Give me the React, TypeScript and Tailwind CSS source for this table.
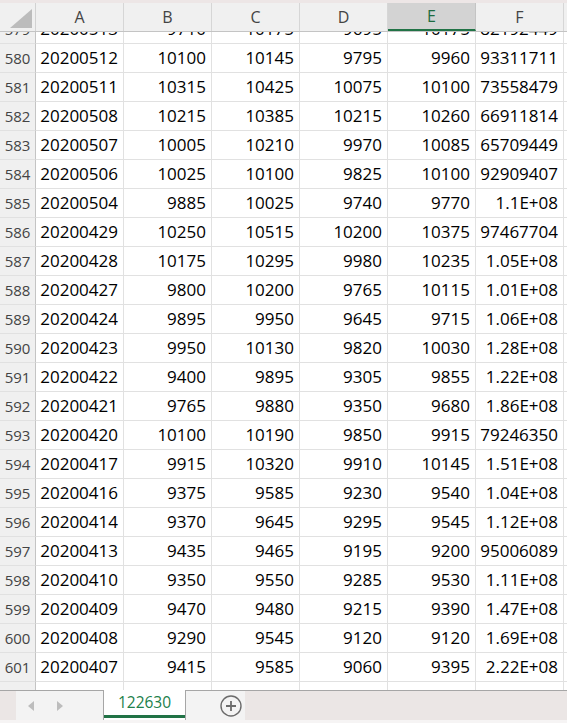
import React from "react"

const rows: [number, string[]][] = [
  [579, ["20200513", "9710", "10175", "9695", "10175", "82192449"]],
  [580, ["20200512", "10100", "10145", "9795", "9960", "93311711"]],
  [581, ["20200511", "10315", "10425", "10075", "10100", "73558479"]],
  [582, ["20200508", "10215", "10385", "10215", "10260", "66911814"]],
  [583, ["20200507", "10005", "10210", "9970", "10085", "65709449"]],
  [584, ["20200506", "10025", "10100", "9825", "10100", "92909407"]],
  [585, ["20200504", "9885", "10025", "9740", "9770", "1.1E+08"]],
  [586, ["20200429", "10250", "10515", "10200", "10375", "97467704"]],
  [587, ["20200428", "10175", "10295", "9980", "10235", "1.05E+08"]],
  [588, ["20200427", "9800", "10200", "9765", "10115", "1.01E+08"]],
  [589, ["20200424", "9895", "9950", "9645", "9715", "1.06E+08"]],
  [590, ["20200423", "9950", "10130", "9820", "10030", "1.28E+08"]],
  [591, ["20200422", "9400", "9895", "9305", "9855", "1.22E+08"]],
  [592, ["20200421", "9765", "9880", "9350", "9680", "1.86E+08"]],
  [593, ["20200420", "10100", "10190", "9850", "9915", "79246350"]],
  [594, ["20200417", "9915", "10320", "9910", "10145", "1.51E+08"]],
  [595, ["20200416", "9375", "9585", "9230", "9540", "1.04E+08"]],
  [596, ["20200414", "9370", "9645", "9295", "9545", "1.12E+08"]],
  [597, ["20200413", "9435", "9465", "9195", "9200", "95006089"]],
  [598, ["20200410", "9350", "9550", "9285", "9530", "1.11E+08"]],
  [599, ["20200409", "9470", "9480", "9215", "9390", "1.47E+08"]],
  [600, ["20200408", "9290", "9545", "9120", "9120", "1.69E+08"]],
  [601, ["20200407", "9415", "9585", "9060", "9395", "2.22E+08"]],
  [602, ["", "", "", "", "", ""]],
]

const cols = ["A", "B", "C", "D", "E", "F"]

export default function App() {
  return (
    <div
      className="w-[567px] h-[723px] flex flex-col overflow-hidden bg-white"
      style={{ fontFamily: '"Open Sans", "Noto Sans", sans-serif' }}
    >
      {/* window strip */}
      <div className="h-[3px] shrink-0 bg-[#ede6e6]" />

      {/* Column headers */}
      <div className="h-[29px] shrink-0 flex bg-[#f0f0f0] border-b border-[#c4c4c4]">
        <div className="w-[36px] shrink-0 relative border-r border-[#d2d2d2]">
          <svg className="absolute right-[3px] bottom-[3px]" width="22" height="19" viewBox="0 0 22 19">
            <polygon points="22,0 22,19 0,19" fill="#bcbcbc" />
          </svg>
        </div>
        {cols.map((c) =>
          c === "E" ? (
            <div
              key={c}
              className="w-[88px] shrink-0 flex items-center justify-center bg-[#d3d3d3] border-r border-[#c4c4c4] border-b-2 border-b-[#217346] text-[16px] text-[#1e6b41]"
            >
              {c}
            </div>
          ) : (
            <div
              key={c}
              className="w-[88px] shrink-0 flex items-center justify-center border-r border-[#d6d6d6] text-[16px] text-[#444]"
            >
              {c}
            </div>
          )
        )}
        <div className="flex-1" />
      </div>

      {/* Grid body */}
      <div className="flex-1 overflow-hidden">
        {rows.map(([n, vals], i) => (
          <div
            key={n}
            className={`h-[29px] flex ${i === 0 ? "mt-[-17px]" : ""}`}
          >
            <div className="w-[36px] shrink-0 flex items-center justify-center bg-[#f0f0f0] border-r border-[#c4c4c4] border-b border-b-[#e1e1e1] text-[15px] text-[#444]">
              {n}
            </div>
            {vals.map((v, j) => (
              <div
                key={j}
                className="w-[88px] shrink-0 flex items-center justify-end pr-[5px] border-r border-b border-[#e1e1e1] text-[17px] text-black whitespace-nowrap overflow-hidden"
              >
                {v}
              </div>
            ))}
            <div className="flex-1 border-b border-[#e1e1e1]" />
          </div>
        ))}
      </div>

      {/* Sheet tabs */}
      <div className="h-[30px] shrink-0 flex bg-[#ebe6e5]">
        <div className="w-[16px] shrink-0 border-t border-[#a6a6a6]" />
        <div className="w-[87px] shrink-0 flex items-center gap-[23px] pl-[12px] bg-[#f3f3f3] border-t border-[#a6a6a6]">
          <svg width="6" height="10" viewBox="0 0 6 10">
            <polygon points="6,0 6,10 0,5" fill="#bdbdbd" />
          </svg>
          <svg width="6" height="10" viewBox="0 0 6 10">
            <polygon points="0,0 0,10 6,5" fill="#bdbdbd" />
          </svg>
        </div>
        <div className="w-[83px] shrink-0 flex flex-col bg-white border-x border-[#a6a6a6]">
          <div className="flex-1 flex items-center justify-center text-[15.5px] text-[#21804a]">
            122630
          </div>
          <div className="h-[3px] mb-[2px] bg-[#217346]" />
        </div>
        <div className="w-[59px] shrink-0 flex items-center justify-end pr-[3px] bg-[#f3f3f3] border-t border-[#a6a6a6]">
          <svg width="22" height="22" viewBox="0 0 22 22">
            <circle cx="11" cy="11" r="10" fill="none" stroke="#6b6b6b" strokeWidth="1.4" />
            <path d="M11 6v10M6 11h10" stroke="#6b6b6b" strokeWidth="1.8" />
          </svg>
        </div>
        <div className="flex-1 border-t border-[#a6a6a6]" />
      </div>
      <div className="h-[3px] shrink-0 bg-[#f6f4f4]" />
    </div>
  )
}
